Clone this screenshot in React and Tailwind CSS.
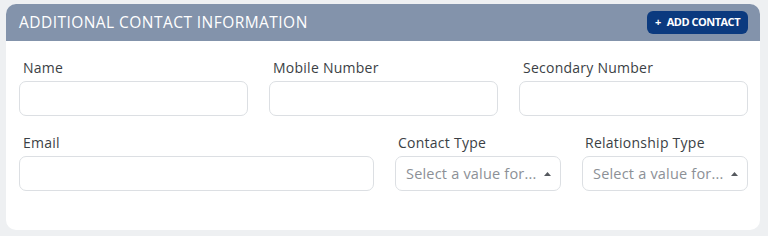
import React from 'react';

const font = { fontFamily: '"Open Sans", "DejaVu Sans", sans-serif' };

function Field({ label, className = '' }) {
    return (
        <div className={`flex flex-col ${className}`}>
            <label className="h-[26px] pl-[4px] text-[14px] leading-[26px] tracking-[0.25px] text-[#3b3f45]">{label}</label>
            <input
                type="text"
                className="h-[35px] rounded-[7px] border border-[#dcdfe3] bg-white px-3 text-[14px] outline-none"
            />
        </div>
    );
}

function SelectField({ label, className = '' }) {
    return (
        <div className={`flex flex-col ${className}`}>
            <label className="h-[26px] pl-[3px] text-[14px] leading-[26px] tracking-[0.25px] text-[#3b3f45]">{label}</label>
            <div className="flex h-[35px] items-center justify-between rounded-[7px] border border-[#dcdfe3] bg-white pl-[10px] pr-[9px]">
                <span className="text-[14.5px] tracking-[0.2px] text-[#8c9096]">Select a value for...</span>
                <svg width="7" height="4" viewBox="0 0 7 4">
                    <path d="M0 4 L3.5 0 L7 4 Z" fill="#55595e" />
                </svg>
            </div>
        </div>
    );
}

export default function App() {
    return (
        <div className="h-[236px] w-[768px] bg-[#eef0f2] pl-[6px] pr-[8px] pt-[4px]" style={font}>
            <div className="h-[226px] overflow-hidden rounded-[10px] bg-white">
                {/* Header */}
                <div className="flex h-[37px] items-center justify-between bg-[#8393ab] pl-[13px] pr-[12px]">
                    <h2 className="text-[15.5px] tracking-[0.45px] text-white">ADDITIONAL CONTACT INFORMATION</h2>
                    <button className="flex h-[23px] items-center gap-[6px] rounded-[6px] bg-[#0b3a7f] px-[8px] text-[11px] font-bold tracking-[-0.5px] text-white">
                        <span>+</span>
                        <span>ADD CONTACT</span>
                    </button>
                </div>

                {/* Form */}
                <div className="px-[13px] pr-[12px] pt-[14px]">
                    <div className="grid grid-cols-3 gap-x-[21px]">
                        <Field label="Name" />
                        <Field label="Mobile Number" />
                        <Field label="Secondary Number" />
                    </div>
                    <div className="mt-[14px] flex gap-x-[21px]">
                        <Field label="Email" className="w-[355px]" />
                        <SelectField label="Contact Type" className="w-[166px]" />
                        <SelectField label="Relationship Type" className="flex-1" />
                    </div>
                </div>
            </div>
        </div>
    );
}
